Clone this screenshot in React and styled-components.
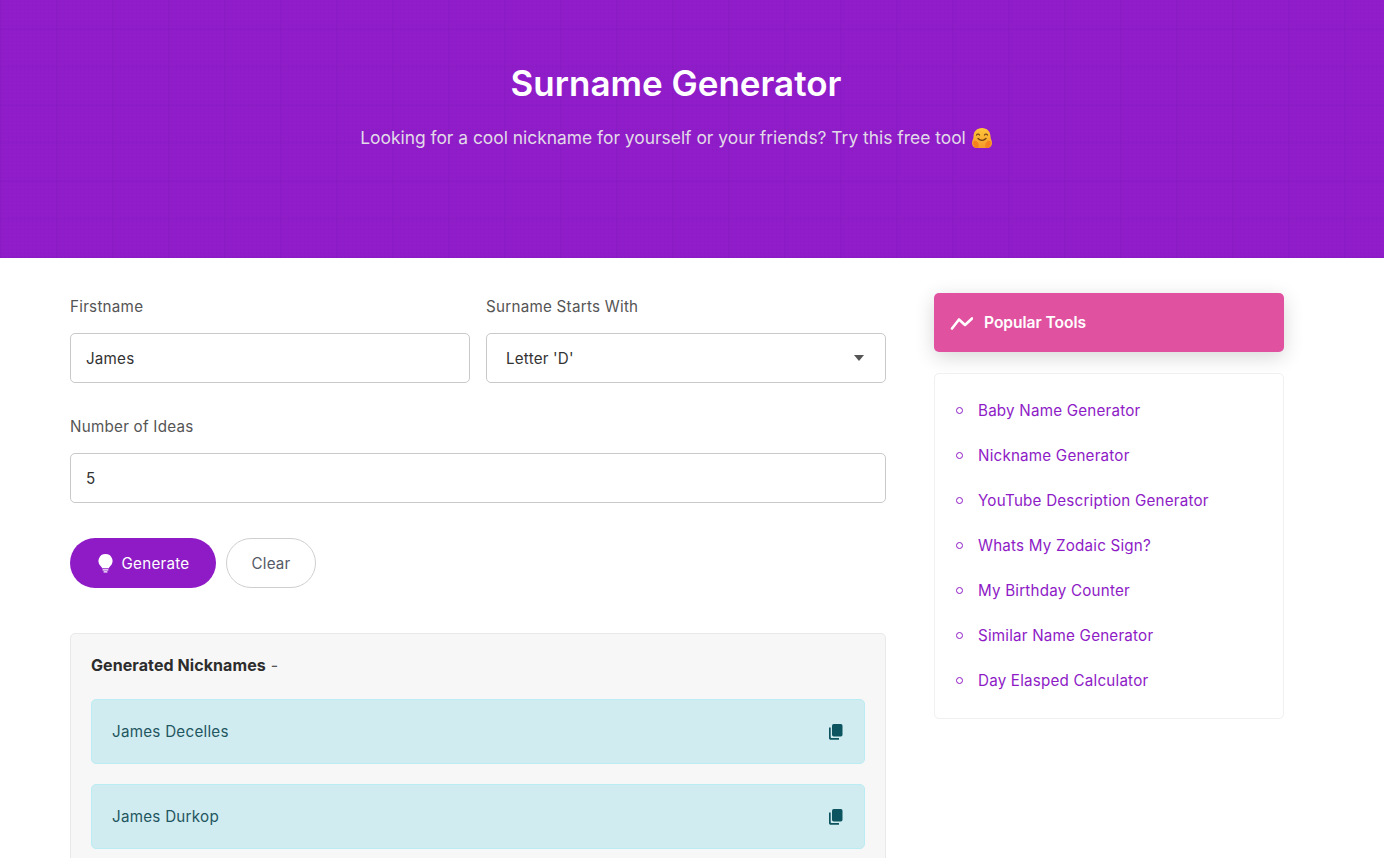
import React from "react";
import styled, { createGlobalStyle } from "styled-components";

const Global = createGlobalStyle`
  html, body { margin: 0; padding: 0; height: 858px; overflow: hidden; background: #fff; }
  body { font-family: Inter, "Noto Sans", sans-serif; color: #333; }
  * { box-sizing: border-box; }
`;
const Hero = styled.header`
  height: 258px; padding: 60px 32px 0 0; text-align: center; color: #fff;
  background-color: #911dca;
  background-image:
    repeating-linear-gradient(0deg, rgba(70,0,130,.04) 0 1px, transparent 1px 4px),
    repeating-linear-gradient(90deg, rgba(70,0,130,.04) 0 1px, transparent 1px 4px),
    repeating-linear-gradient(0deg, rgba(70,0,130,.04) 0 2px, transparent 2px 38px),
    repeating-linear-gradient(90deg, rgba(70,0,130,.04) 0 2px, transparent 2px 56px);
`;
const Title = styled.h1`
  margin: 0; font-size: 35px; line-height: 46px; font-weight: 600; letter-spacing: 0;
`;
const Lead = styled.p`
  margin: 19px 0 0; font-size: 17.4px; line-height: 26px; color: #e2dae8; font-weight: 400;
  display: flex; justify-content: center; align-items: center; gap: 6px;
`;
const Main = styled.main`
  display: flex; align-items: flex-start; gap: 48px; padding: 35px 0 0 70px;
`;
const Left = styled.section`width: 816px; flex: none;`;
const Row = styled.div`display: grid; grid-template-columns: 400px 400px; gap: 0 16px;`;
const Field = styled.div`margin-bottom: ${p => p.$mb}px; grid-column: ${p => p.$wide ? "1 / -1" : "auto"};`;
const Label = styled.label`display: block; font-size: 15.2px; line-height: 28px; color: #555; margin-bottom: 12px; letter-spacing: .25px;`;
const Input = styled.div`
  height: 50px; border: 1px solid #c9c9c9; border-radius: 5px; padding: 0 15px 0 ${p => p.$pl || 15}px; display: flex; align-items: center;
  justify-content: space-between; font-size: 15.2px; color: #333; background: #fff; letter-spacing: .2px;
`;
const Caret = styled.span`width: 0; height: 0; border: 5px solid transparent; border-top: 6px solid #555; border-bottom: 0; margin-right: 6px;`;
const Buttons = styled.div`display: flex; gap: 10px; margin-top: 35px;`;
const Primary = styled.button`
  width: 146px; height: 50px; border: 0; border-radius: 25px; background: #8e1bc6; color: #fff; font: 400 15.2px Inter, sans-serif;
  display: flex; align-items: center; justify-content: center; gap: 9px; padding: 0 0 0 1px; letter-spacing: .25px;
`;
const Secondary = styled.button`
  width: 90px; height: 50px; border: 1px solid #cfcfcf; border-radius: 25px; background: #fff; color: #555a66; font: 400 15.2px Inter, sans-serif; padding: 0; letter-spacing: .2px;
`;
const Results = styled.div`
  margin-top: 45px; background: #f7f7f7; border: 1px solid #e9e9e9; border-radius: 5px; padding: 19px 20px 20px; height: 400px;
`;
const ResultHead = styled.div`font-size: 16px; line-height: 24px; color: #555; margin-bottom: 22px; height: 24px; display: flex; align-items: center; gap: 5px;`;
const Strong = styled.b`font-weight: 700; color: #2d2d2d; letter-spacing: .08px;`;
const Alert = styled.div`
  height: 65px; margin-bottom: 20px; background: #d1ecf1; border: 1px solid #b9ecf3; border-radius: 5px; color: #1f5660;
  display: flex; align-items: center; justify-content: space-between; padding: 0 21px 0 20px; font-size: 15.2px; letter-spacing: .25px;
`;
const Side = styled.aside`width: 350px; flex: none;`;
const SideHead = styled.div`
  height: 59px; background: #e052a0; border-radius: 5px; color: #fff; font-weight: 600; font-size: 15.6px; display: flex; align-items: center; gap: 11px;
  padding-left: 16px; box-shadow: 0 5px 20px rgba(0,0,0,.16); letter-spacing: -.05px;
`;
const SideList = styled.ul`
  list-style: none; margin: 21px 0 0; padding: 14px 20px 15px; border: 1px solid #f0f0f0; border-radius: 5px; background: #fff;
`;
const SideItem = styled.li`
  height: 45px; display: flex; align-items: center; gap: 15px; color: #8e1bc6; font-size: 15.2px; letter-spacing: .2px;
`;
const Ring = styled.span`width: 7px; height: 7px; border: 1px solid #8e1bc6; border-radius: 50%; margin-left: 1px; flex: none;`;

const Hug = () => (
  <svg width="20" height="20" viewBox="0 0 20 20">
    <defs>
      <linearGradient id="hugFace" x1="0" y1="0" x2="0" y2="1">
        <stop offset="0" stopColor="#fdc73a" />
        <stop offset="1" stopColor="#f79a2a" />
      </linearGradient>
    </defs>
    <path d="M10 0c5 0 8.500 3.500 8.500 8.500 0 2.500 1.500 4 1.500 6.500 0 3-2 5-5 5H5c-3 0-5-2-5-5 0-2.500 1.500-4 1.500-6.500C1.500 3.500 5 0 10 0z" fill="url(#hugFace)" />
    <path d="M4.500 7q1.500-2 3 0M12.500 7q1.500-2 3 0M6 10.500q4 3.600 8 0" stroke="#6b3a10" strokeWidth="1.200" fill="none" strokeLinecap="round" />
    <path d="M1 14q1.500-2.500 3.500-1l2 2.500q.8 2-.5 4.500H5q-3.500 0-4-6zM19 14q-1.500-2.500-3.500-1l-2 2.500q-.8 2 .5 4.500h1q3.500 0 4-6z" fill="#f5821f" />
  </svg>
);
const Bulb = () => (
  <svg width="15" height="19" viewBox="0 0 15 19" fill="#fff">
    <path d="M7.500 0a7 7 0 0 0-4.700 12.200c.8.800 1.200 1.400 1.300 2.100h6.800c.1-.7.500-1.300 1.300-2.100A7 7 0 0 0 7.500 0z" />
    <rect x="4.500" y="15.200" width="6" height="1.300" rx=".6" />
    <rect x="5.500" y="17.200" width="4" height="1.300" rx=".6" />
  </svg>
);
const Trend = () => (
  <svg width="23" height="14" viewBox="0 0 23 14" fill="none" stroke="#fff" strokeWidth="2.600" strokeLinecap="round" strokeLinejoin="round">
    <path d="M2 12.500 9 3.500l6 5.500 7-6.500" />
  </svg>
);
const Copy = () => (
  <svg width="14" height="16" viewBox="0 0 14 16">
    <path d="M0 3.500h1.700v9.800c0 .4.300.7.700.7H10v1.800H1.800C.8 15.800 0 15 0 14z" fill="#0c5460" />
    <rect x="3" y="0" width="10.500" height="12.500" rx="1.700" fill="#0c5460" />
  </svg>
);

const tools = ["Baby Name Generator","Nickname Generator","YouTube Description Generator","Whats My Zodaic Sign?","My Birthday Counter","Similar Name Generator","Day Elasped Calculator"];

export default function App() {
  return (
    <>
      <Global />
      <Hero>
        <Title>Surname Generator</Title>
        <Lead>Looking for a cool nickname for yourself or your friends? Try this free tool <Hug /></Lead>
      </Hero>
      <Main>
        <Left>
          <Row>
            <Field $mb={30}><Label>Firstname</Label><Input>James</Input></Field>
            <Field $mb={30}><Label>Surname Starts With</Label><Input $pl={19}>Letter 'D'<Caret /></Input></Field>
            <Field $wide $mb={0}><Label>Number of Ideas</Label><Input>5</Input></Field>
          </Row>
          <Buttons>
            <Primary><Bulb />Generate</Primary>
            <Secondary>Clear</Secondary>
          </Buttons>
          <Results>
            <ResultHead><Strong>Generated Nicknames</Strong> -</ResultHead>
            <Alert>James Decelles<Copy /></Alert>
            <Alert>James Durkop<Copy /></Alert>
          </Results>
        </Left>
        <Side>
          <SideHead><Trend />Popular Tools</SideHead>
          <SideList>
            {tools.map(t => <SideItem key={t}><Ring />{t}</SideItem>)}
          </SideList>
        </Side>
      </Main>
    </>
  );
}
